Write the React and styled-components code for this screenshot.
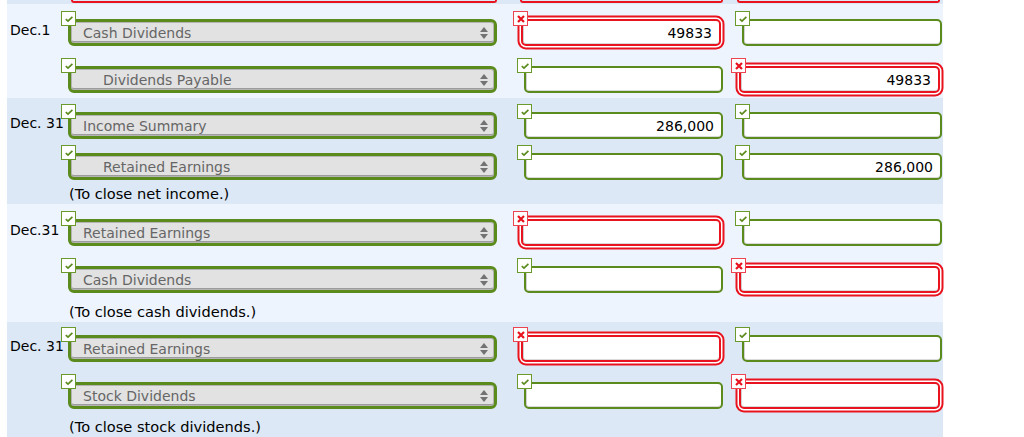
import React from "react"
import styled, { createGlobalStyle, css } from "styled-components"

const green = "#5b8a1d"
const red = "#e8131f"

const Global = createGlobalStyle`
body {
  margin: 0;
  background: #fff;
  font-family: "DejaVu Sans", Verdana, sans-serif;
  font-size: 14px;
}
`

const Sheet = styled.div`
  width: 936px;
  margin-left: 7px;
`

const Strip = styled.div`
  display: flex;
  height: 4px;
  background-color: #dce8f5;
`

const Entry = styled.div`
  padding: ${p => p.$top}px 0 ${p => p.$bottom}px;
  background-color: ${p => (p.$shade ? "#dce8f5" : "#eef4fd")};
  display: flex;
  flex-direction: column;
  gap: ${p => p.$gap}px;
`

const Row = styled.div`
  display: flex;
  align-items: flex-start;
`

const DateCell = styled.div`
  width: 58px;
  padding: 3px 0 0 3px;
  line-height: 17px;
  color: #000;
  white-space: nowrap;
`

const SelectCell = styled.div`
  position: relative;
  width: 429px;
`

const DebitCell = styled.div`
  position: relative;
  width: 199px;
  margin-left: 27px;
`

const CreditCell = styled.div`
  position: relative;
  width: 200px;
  margin-left: 19px;
`

const Select = styled.div`
  height: 27px;
  box-sizing: border-box;
  border: 3px solid ${green};
  border-radius: 6px;
  background: #e2e2e2;
  box-shadow: inset 0 0 0 1px #b4b4b4, inset 0 -2px 0 #9c9c9c;
  display: flex;
  align-items: center;
  padding: 0 6px 0 ${p => (p.$indent ? 32 : 12)}px;
  color: #666;
`

const SelectText = styled.span`
  flex: 1;
  white-space: nowrap;
`

const Spinner = styled.span`
  display: flex;
  flex-direction: column;
  gap: 2px;
  &::before,
  &::after {
    content: "";
    width: 0;
    height: 0;
    border-left: 4px solid transparent;
    border-right: 4px solid transparent;
  }
  &::before {
    border-bottom: 5px solid #727272;
  }
  &::after {
    border-top: 5px solid #727272;
  }
`

const Field = styled.div`
  height: 27px;
  box-sizing: border-box;
  border: 2px solid ${green};
  border-radius: 5px;
  background: #fff;
  box-shadow: inset 1px 0 0 #d2d2d2, inset 0 -1px 0 #dadada;
  padding-right: 7px;
  display: flex;
  align-items: center;
  justify-content: flex-end;
  color: #000;
  ${p =>
    p.$wrong &&
    css`
      border-color: ${red};
      margin: 0 2px 0 -3px;
      box-shadow: inset 1px 0 0 #d2d2d2, inset 0 -1px 0 #dadada,
        0 0 0 1.5px #fff, 0 0 0 3.5px ${red};
    `}
`

const Tail = styled.div`
  height: 1px;
  border: 2px solid ${red};
  border-top: none;
  border-radius: 0 0 5px 5px;
  margin: 0 ${p => p.$right || 0}px 0 ${p => p.$left || 0}px;
`

const Mark = styled.span`
  position: absolute;
  top: -8px;
  left: ${p => (p.$wrong ? -11 : -7)}px;
  z-index: 1;
  width: 15px;
  height: 15px;
  box-sizing: border-box;
  background: #fff;
  border: 1px solid ${p => (p.$wrong ? "#ea4550" : "#6a9a2c")};
  display: flex;
  align-items: center;
  justify-content: center;
`

const Note = styled.div`
  margin: ${p => p.$gap}px 0 0 62px;
  line-height: 17px;
  font-size: 14.6px;
  color: #000;
`

const Tick = ({ wrong }) => (
  <Mark $wrong={wrong}>
    {wrong ? (
      <svg width="10" height="10" viewBox="0 0 10 10">
        <path d="M2 2 L8 8 M8 2 L2 8" stroke={red} strokeWidth="2.2" />
      </svg>
    ) : (
      <svg width="10" height="10" viewBox="0 0 10 10">
        <path d="M1.8 5.2 L4 7.2 L8.4 2.8" stroke={green} strokeWidth="1.7" fill="none" />
      </svg>
    )}
  </Mark>
)

const Line = ({ date, account, indent, debit, credit }) => (
  <Row>
    <DateCell>{date}</DateCell>
    <SelectCell>
      <Tick />
      <Select $indent={indent}>
        <SelectText>{account}</SelectText>
        <Spinner />
      </Select>
    </SelectCell>
    <DebitCell>
      <Tick wrong={debit.wrong} />
      <Field $wrong={debit.wrong}>{debit.value}</Field>
    </DebitCell>
    <CreditCell>
      <Tick wrong={credit.wrong} />
      <Field $wrong={credit.wrong}>{credit.value}</Field>
    </CreditCell>
  </Row>
)

const entries = [
  {
    date: "Dec.1",
    top: 15, gap: 20, bottom: 5,
    lines: [
      { account: "Cash Dividends", debit: { value: "49833", wrong: true }, credit: {} },
      { account: "Dividends Payable", indent: true, debit: {}, credit: { value: "49833", wrong: true } },
    ],
  },
  {
    date: "Dec. 31",
    shade: true,
    top: 14, gap: 14, bottom: 2, noteGap: 5,
    note: "(To close net income.)",
    lines: [
      { account: "Income Summary", debit: { value: "286,000" }, credit: {} },
      { account: "Retained Earnings", indent: true, debit: {}, credit: { value: "286,000" } },
    ],
  },
  {
    date: "Dec.31",
    top: 15, gap: 20, bottom: 2, noteGap: 10,
    note: "(To close cash dividends.)",
    lines: [
      { account: "Retained Earnings", debit: { wrong: true }, credit: {} },
      { account: "Cash Dividends", debit: {}, credit: { wrong: true } },
    ],
  },
  {
    date: "Dec. 31",
    shade: true,
    top: 13, gap: 20, bottom: 4, noteGap: 9,
    note: "(To close stock dividends.)",
    lines: [
      { account: "Retained Earnings", debit: { wrong: true }, credit: {} },
      { account: "Stock Dividends", debit: {}, credit: { wrong: true } },
    ],
  },
]

const App = () => (
  <>
    <Global />
    <Sheet>
      <Strip>
        <DateCell />
        <SelectCell>
          <Tail $left={3} />
        </SelectCell>
        <DebitCell>
          <Tail $left={-4} />
        </DebitCell>
        <CreditCell>
          <Tail $left={-5} $right={2} />
        </CreditCell>
      </Strip>
      {entries.map((entry, i) => (
        <Entry key={i} $shade={entry.shade} $top={entry.top} $gap={entry.gap} $bottom={entry.bottom}>
          {entry.lines.map((line, j) => (
            <Line key={j} date={j === 0 ? entry.date : ""} {...line} />
          ))}
          {entry.note && <Note $gap={entry.noteGap - entry.gap}>{entry.note}</Note>}
        </Entry>
      ))}
    </Sheet>
  </>
)

export default App
